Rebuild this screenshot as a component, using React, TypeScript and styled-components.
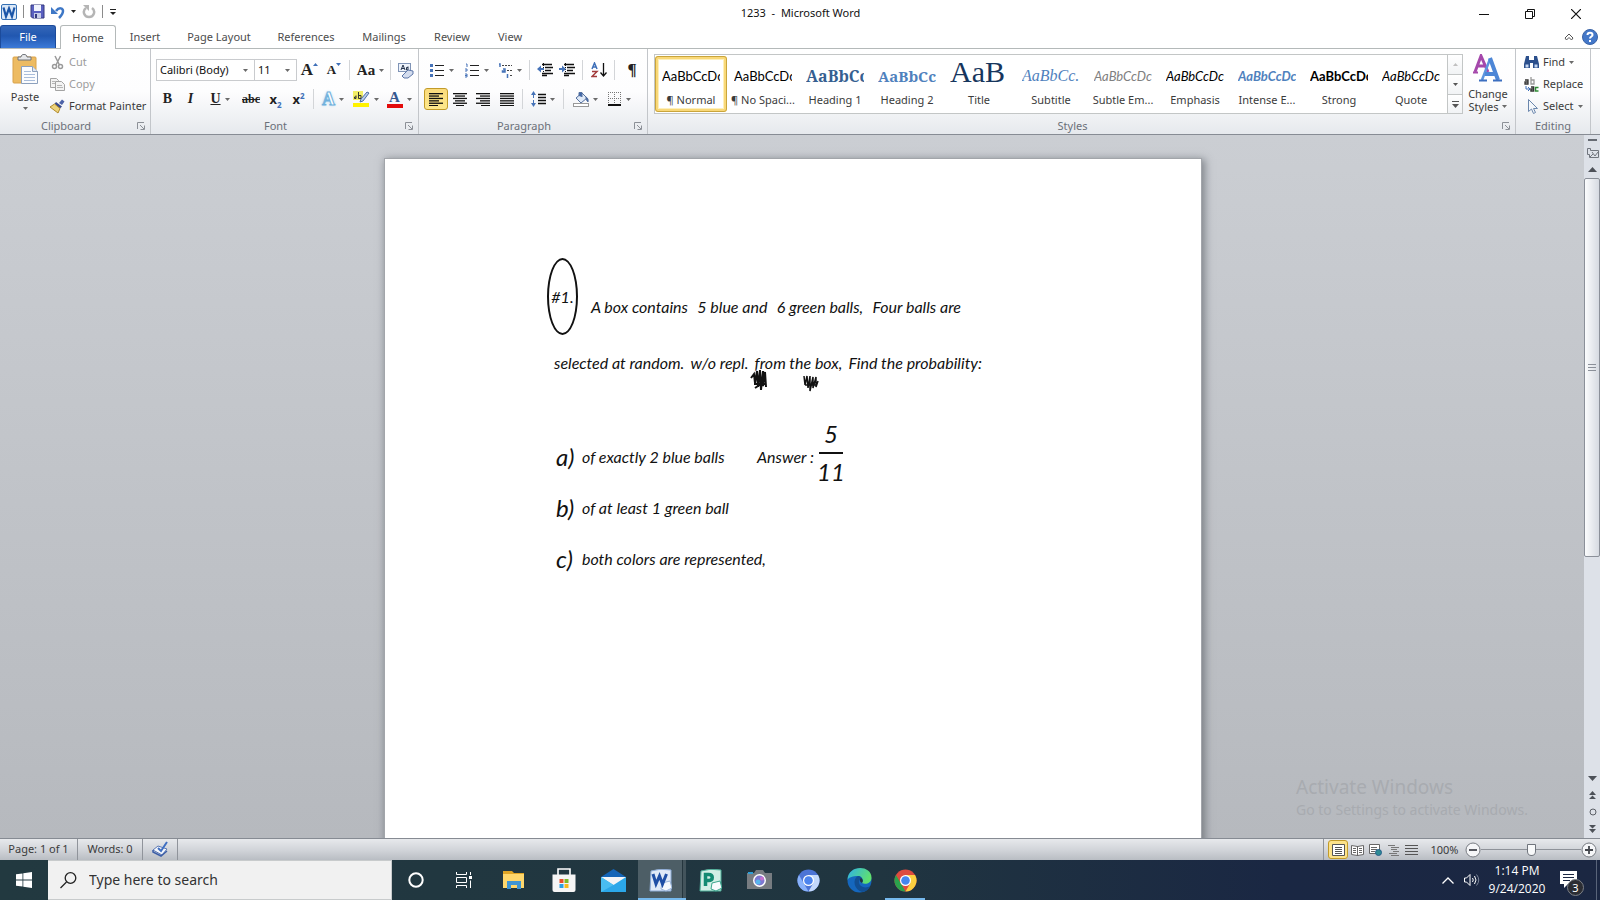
import React from "react";
import styled, { createGlobalStyle, css } from "styled-components";

const UI = `"Noto Sans", "Open Sans", sans-serif`;
const SERIF = `"Liberation Serif", serif`;

const Global = createGlobalStyle`
  *, *::before, *::after { box-sizing: border-box; }
  html, body { margin: 0; padding: 0; height: 100%; }
  #root { height: 100%; }
  body { font-family: ${UI}; font-size: 11px; line-height: 14px; color: #3b3b3b; overflow: hidden; }
  button, input, select { font: inherit; color: inherit; margin: 0; padding: 0; border: 0; background: none; border-radius: 0; outline: 0; }
  svg { display: block; flex: none; }
  h1, h2, p { margin: 0; font: inherit; }
`;

/* ---------- window frame ---------- */
const Screen = styled.div`
  display: grid;
  grid-template-rows: 25px 24px 86px minmax(0, 1fr) 22px 40px;
  height: 100vh;
  background: #fff;
`;
const TitleBar = styled.header`
  display: grid;
  grid-template-columns: 1fr auto 1fr;
  align-items: start;
`;
const QuickAccess = styled.div`
  display: flex;
  align-items: center;
  gap: 6px;
  height: 23px;
  padding-left: 1px;
`;
const PlainButton = styled.button`
  display: flex;
  align-items: center;
  justify-content: center;
`;
const ThinRule = styled.span`
  width: 1px;
  height: 13px;
  background: #8b8b8b;
`;
const WindowTitle = styled.h1`
  color: #111;
  line-height: 26px;
  white-space: pre;
`;
const WindowButtons = styled.div`
  display: flex;
  justify-content: flex-end;
  padding-right: 2px;
`;
const WindowButton = styled(PlainButton)`
  width: 46px;
  height: 28px;
`;

/* ---------- tabs ---------- */
const TabRow = styled.nav`
  display: flex;
  border-bottom: 1px solid #b4b9b9;
`;
const FileTab = styled.button`
  width: 56px;
  height: 23px;
  border: 1px solid #1c4b9b;
  border-bottom: 0;
  border-radius: 3px 3px 0 0;
  background: linear-gradient(#3567b8, #2157b0 45%, #3c7ad8);
  color: #fff;
  margin-right: 4px;
`;
const Tab = styled.button<{ $active?: boolean; $w: number }>`
  width: ${(p) => p.$w}px;
  height: 23px;
  color: #4c4c4c;
  ${(p) =>
    p.$active &&
    css`
      height: 24px;
      border: 1px solid #b4b9b9;
      border-bottom: 0;
      border-radius: 3px 3px 0 0;
      background: #fff;
    `}
`;
const TabTools = styled.div`
  display: flex;
  align-items: center;
  gap: 8px;
  margin-left: auto;
  padding-right: 3px;
`;

/* ---------- ribbon ---------- */
const Ribbon = styled.div`
  display: flex;
  background: linear-gradient(#fff, #fdfdfe 50%, #e6e9ed);
  border-bottom: 1px solid #878c94;
  padding-right: 10px;
`;
const Group = styled.section<{ $w?: number }>`
  display: flex;
  flex-direction: column;
  ${(p) => (p.$w ? `flex: 0 0 ${p.$w}px;` : "flex: 1 1 0; min-width: 0;")}
  border-right: 1px solid #c3c6ca;
`;
const GroupBody = styled.div`
  display: flex;
  flex: 1;
  min-height: 0;
`;
const GroupLabel = styled.div<{ $launcher?: boolean }>`
  display: grid;
  grid-template-columns: ${(p) => (p.$launcher ? "1fr 18px" : "1fr")};
  align-items: center;
  height: 17px;
  text-align: center;
  color: #6b7079;
`;
const BigButton = styled.button`
  display: flex;
  flex-direction: column;
  align-items: center;
  width: 50px;
  padding-top: 5px;
  line-height: 13px;
`;
const BigLabel = styled.span<{ $gap?: number }>`
  display: flex;
  flex-direction: column;
  align-items: center;
  gap: ${(p) => p.$gap ?? 0}px;
  margin-top: 5px;
`;
const Inline = styled.span`
  display: flex;
  align-items: center;
  gap: 4px;
`;
const SmallStack = styled.div<{ $pad?: number }>`
  display: flex;
  flex-direction: column;
  padding-top: 2px;
  padding-left: ${(p) => p.$pad ?? 0}px;
`;
const SmallButton = styled.button<{ $dim?: boolean }>`
  display: flex;
  align-items: center;
  gap: 4px;
  height: 22px;
  white-space: nowrap;
  color: ${(p) => (p.$dim ? "#9c9c9c" : "#3b3b3b")};
`;
const ToolRows = styled.div`
  display: flex;
  flex-direction: column;
  gap: 5px;
  padding: 9px 0 0 5px;
`;
const ToolRow = styled.div`
  display: flex;
  align-items: center;
  height: 24px;
`;
const Tool = styled.button<{ $w: number; $on?: boolean; $tight?: boolean }>`
  display: flex;
  align-items: center;
  justify-content: center;
  gap: ${(p) => (p.$tight ? 0 : 4)}px;
  width: ${(p) => p.$w}px;
  height: 22px;
  ${(p) =>
    p.$on &&
    css`
      border: 1px solid #c29b29;
      border-radius: 3px;
      background: linear-gradient(#fbdb7c, #fde88c);
    `}
`;
const Raised = styled.span`
  align-self: flex-start;
  padding-top: 4px;
`;
const ToolRule = styled.span<{ $m: number }>`
  width: 1px;
  height: 20px;
  margin: 0 ${(p) => p.$m}px;
  background: #d3d5d8;
`;
const Combo = styled.label<{ $w: number }>`
  display: grid;
  grid-template-columns: 1fr 11px;
  align-items: center;
  width: ${(p) => p.$w}px;
  height: 22px;
  padding-left: 3px;
  border: 1px solid #c9cbce;
  margin-right: -1px;
  background: #fff;
  color: #111;
`;
const ComboSelect = styled.select`
  appearance: none;
  width: 100%;
`;
const Letter = styled.span<{ $size: number; $color?: string; $italic?: boolean; $line?: string }>`
  font: ${(p) => (p.$italic ? "italic" : "normal")} bold ${(p) => p.$size}px/18px ${SERIF};
  color: ${(p) => p.$color ?? "#222"};
  text-decoration: ${(p) => p.$line ?? "none"};
`;
const SansX = styled.span`
  font: bold 13px/18px ${UI};
  color: #222;
`;
const Sub = styled.sub`
  font-size: 8px;
  line-height: 0;
  color: #3e6fb8;
`;
const Sup = styled.sup`
  font-size: 8px;
  line-height: 0;
  color: #3e6fb8;
`;
const GlowLetter = styled(Letter)`
  color: #fff;
  -webkit-text-stroke: 1px #6fb0dc;
  text-shadow: 0 0 3px #8cc6ec;
`;
const FontColor = styled.span`
  width: 16px;
  border-bottom: 4px solid #e30b0b;
  font: bold 15px/13px ${SERIF};
  color: #34588f;
`;

/* ---------- styles gallery ---------- */
const Gallery = styled.div`
  display: flex;
  flex: 1;
  min-width: 0;
  height: 60px;
  margin: 5px 0 0 6px;
  border: 1px solid #c3c6c6;
  background: #fff;
`;
const Cards = styled.div`
  display: flex;
  flex: 1;
  min-width: 0;
  overflow: hidden;
`;
const Card = styled.button<{ $on?: boolean }>`
  display: flex;
  flex-direction: column;
  align-items: center;
  flex: 0 0 72px;
  height: 56px;
  margin-top: 1px;
  padding: 4px 0 0;
  border: 3px solid transparent;
  border-radius: 3px;
  ${(p) =>
    p.$on &&
    css`
      border-color: #f9d878;
      box-shadow: inset 0 0 0 1px #fdf0bd, inset 0 0 0 1px #fdf0bd;
      outline: 1px solid #c9a53c;
      outline-offset: -1px;
    `}
`;
const Sample = styled.span<{ $kind: Kind }>`
  display: block;
  width: 58px;
  height: 22px;
  margin-bottom: 8px;
  overflow: hidden;
  white-space: nowrap;
  text-align: left;
  font: ${(p) => KINDS[p.$kind].font};
  color: ${(p) => KINDS[p.$kind].color};
`;
const CardLabel = styled.span`
  white-space: nowrap;
  line-height: 14px;
`;
const GalleryScroll = styled.div`
  display: grid;
  grid-template-rows: repeat(3, 1fr);
  width: 15px;
  border-left: 1px solid #c3c6c6;
`;
const GalleryArrow = styled(PlainButton)`
  & + & { border-top: 1px solid #c3c6c6; }
  background: linear-gradient(#fff, #f1f3f5);
`;

type Kind = "body" | "h1" | "h2" | "title" | "subtitle" | "subtle" | "emph" | "intense" | "strong";
const KINDS: Record<Kind, { font: string; color: string }> = {
  body: { font: `13px/26px Lato, sans-serif`, color: "#000" },
  h1: { font: `bold 16px/26px "Noto Serif", "Liberation Serif", serif`, color: "#365f91" },
  h2: { font: `bold 15px/26px "Noto Serif", "Liberation Serif", serif`, color: "#4f81bd" },
  title: { font: `30px/18px "Liberation Serif", serif`, color: "#17365d" },
  subtitle: { font: `italic 16px/26px "Liberation Serif", serif`, color: "#4f81bd" },
  subtle: { font: `italic 13px/26px Lato, sans-serif`, color: "#808080" },
  emph: { font: `italic 13px/26px Lato, sans-serif`, color: "#000" },
  intense: { font: `italic bold 13px/26px Lato, sans-serif`, color: "#4f81bd" },
  strong: { font: `bold 13px/26px Lato, sans-serif`, color: "#000" },
};
const STYLES: [string, Kind, string][] = [
  ["¶ Normal", "body", "AaBbCcDc"],
  ["¶ No Spaci...", "body", "AaBbCcDc"],
  ["Heading 1", "h1", "AaBbCc"],
  ["Heading 2", "h2", "AaBbCc"],
  ["Title", "title", "AaB"],
  ["Subtitle", "subtitle", "AaBbCc."],
  ["Subtle Em...", "subtle", "AaBbCcDc"],
  ["Emphasis", "emph", "AaBbCcDc"],
  ["Intense E...", "intense", "AaBbCcDc"],
  ["Strong", "strong", "AaBbCcDc"],
  ["Quote", "emph", "AaBbCcDc"],
];

/* ---------- document ---------- */
const Workspace = styled.main`
  position: relative;
  display: flex;
  min-height: 0;
  background: linear-gradient(#cbced3, #b6b9be);
`;
const Desk = styled.div`
  flex: 1;
  display: flex;
  justify-content: center;
  padding: 24px 0 0 2px;
  overflow: hidden;
`;
const Sheet = styled.article`
  position: relative;
  width: 816px;
  min-height: 1056px;
  padding: 99px 160px 0 162px;
  background: #fff;
  color: #111;
  box-shadow: 0 0 0 1px #a2a5aa, 2px 2px 8px 2px rgba(70, 74, 82, 0.55);
  font: italic 16px/24px Lato, sans-serif;
`;
const FirstLine = styled.div`
  display: flex;
  align-items: center;
  gap: 13px;
  height: 77px;
`;
const Circled = styled.h2`
  display: flex;
  align-items: center;
  justify-content: center;
  width: 31px;
  height: 77px;
  border: 2px solid #111;
  border-radius: 50%;
`;
const Phrases = styled.p<{ $w: number }>`
  display: flex;
  justify-content: space-between;
  width: ${(p) => p.$w}px;
  white-space: nowrap;
`;
const LineOne = styled.div`
  padding-top: 20px;
`;
const LineTwo = styled.div`
  padding: 16px 0 0 7px;
`;
const Questions = styled.ol`
  list-style: none;
  margin: 56px 0 0;
  padding: 0 0 0 9px;
`;
const Question = styled.li`
  display: flex;
  align-items: center;
  height: 51px;
  white-space: nowrap;
`;
const Mark = styled.span`
  width: 26px;
  font-size: 24px;
`;
const Wording = styled.span`
  width: 175px;
`;
const Fraction = styled.span`
  display: flex;
  flex-direction: column;
  align-items: center;
  width: 24px;
  margin-left: 5px;
  padding-bottom: 8px;
  line-height: 36px;
  font-size: 24px;
`;
const Over = styled.span`
  width: 100%;
  text-align: center;
  border-bottom: 2px solid #111;
`;
const Scribble = styled.svg<{ $x: number; $y: number }>`
  position: absolute;
  left: ${(p) => p.$x}px;
  top: ${(p) => p.$y}px;
`;
const Watermark = styled.aside`
  position: absolute;
  right: 69px;
  bottom: 17px;
  width: 236px;
  color: #a8abb0;
  font: 14px/22px ${UI};
  white-space: nowrap;
`;
const WatermarkTitle = styled.div`
  font-size: 19px;
  line-height: 24px;
`;
const ScrollBar = styled.div`
  display: flex;
  flex-direction: column;
  align-items: center;
  width: 17px;
  background: #dde1e8;
`;
const ScrollButton = styled(PlainButton)<{ $h: number }>`
  width: 17px;
  height: ${(p) => p.$h}px;
`;
const Track = styled.div`
  display: flex;
  flex: 1;
  width: 17px;
`;
const Thumb = styled.div`
  display: flex;
  align-items: center;
  justify-content: center;
  width: 16px;
  height: 64%;
  border: 1px solid #8b9099;
  border-radius: 2px;
  background: linear-gradient(90deg, #fbfcfd, #d6dae1);
`;

/* ---------- status bar ---------- */
const StatusBar = styled.footer`
  display: flex;
  align-items: center;
  border-top: 1px solid #868b93;
  background: linear-gradient(#e7e9ec, #d0d3d8 55%, #b9bdc3);
`;
const StatusItem = styled.button<{ $w: number }>`
  display: flex;
  align-items: center;
  justify-content: center;
  width: ${(p) => p.$w}px;
  height: 21px;
  padding-bottom: 2px;
  border-right: 1px solid #90949b;
  white-space: nowrap;
`;
const Views = styled.div`
  display: flex;
  align-items: center;
  height: 21px;
  margin-left: auto;
  padding-left: 4px;
  border-left: 1px solid #90949b;
`;
const ViewButton = styled(PlainButton)<{ $on?: boolean }>`
  width: 18px;
  height: 19px;
  ${(p) =>
    p.$on &&
    css`
      width: 20px;
      border: 1px solid #c29b29;
      border-radius: 3px;
      background: #fce28a;
    `}
`;
const ZoomValue = styled(PlainButton)`
  width: 41px;
  margin-left: 4px;
`;
const ZoomSlider = styled.input`
  appearance: none;
  width: 100px;
  height: 16px;
  background: linear-gradient(#8e9299, #8e9299) center / 100% 1px no-repeat;
  &::-webkit-slider-thumb {
    appearance: none;
    width: 9px;
    height: 12px;
    border: 1px solid #6f747c;
    border-radius: 1px 1px 5px 5px;
    background: #f8f9fa;
  }
`;
const EdgeGap = styled.span`
  width: 4px;
`;

/* ---------- taskbar ---------- */
const Taskbar = styled.footer`
  display: flex;
  background: linear-gradient(90deg, #223940, #203540 55%, #1a2743 80%, #1b2742);
  color: #fff;
`;
const TaskButton = styled.button<{ $w?: number; $active?: boolean; $open?: boolean }>`
  display: flex;
  align-items: center;
  justify-content: center;
  width: ${(p) => p.$w ?? 49}px;
  height: 40px;
  ${(p) =>
    p.$active &&
    css`
      padding-right: 4px;
      background: linear-gradient(90deg, #4d5e66 44px, #25363e 44px, #25363e 45px, #43545c 45px);
    `}
  ${(p) => p.$open && "box-shadow: inset 0 -2px #76b9ed;"}
`;
const Search = styled.label`
  display: flex;
  align-items: center;
  gap: 12px;
  width: 344px;
  padding-left: 12px;
  border: 1px solid #c8cbcc;
  border-left: 0;
  background: #f1f1f1;
  color: #333;
`;
const SearchInput = styled.input`
  flex: 1;
  min-width: 0;
  font: 14px/20px ${UI};
  &::placeholder { color: #333; opacity: 1; }
`;
const Tray = styled.div`
  display: flex;
  align-items: center;
  margin-left: auto;
  padding-right: 4px;
`;
const Clock = styled.button`
  width: 66px;
  font: 12px/18px "Open Sans", sans-serif;
  color: #fff;
  white-space: nowrap;
`;
const Notices = styled.button`
  position: relative;
  width: 47px;
  height: 40px;
  border-right: 1px solid #596479;
`;
const NoticeIcon = styled.span`
  position: absolute;
  left: 10px;
  top: 11px;
`;
const Badge = styled.span`
  position: absolute;
  left: 17px;
  top: 19px;
  width: 17px;
  height: 17px;
  border: 1px solid #7c8087;
  border-radius: 50%;
  background: #2b2d33;
  color: #fff;
  font-size: 11px;
  line-height: 15px;
  text-align: center;
`;

/* ---------- icons ---------- */
type SvgProps = { w: number; h?: number; children: React.ReactNode };
const Svg = ({ w, h = w, children }: SvgProps) => (
  <svg width={w} height={h} viewBox={`0 0 ${w} ${h}`} fill="none" aria-hidden="true">
    {children}
  </svg>
);
const Caret = ({ color = "#6a6a6a", up = false }: { color?: string; up?: boolean }) => (
  <Svg w={5} h={3}>
    <path d={up ? "M0 3h5L2.500 0z" : "M0 0h5L2.500 3z"} fill={color} />
  </Svg>
);
const Launcher = () => (
  <Svg w={8}>
    <path d="M.5 7V.5H7M3 3l4 4M7.500 3.500v4h-4" stroke="#8c9097" />
  </Svg>
);
const WordLogo = () => (
  <Svg w={16}>
    <rect x=".5" y=".5" width="15" height="15" rx="1.500" fill="#dbe8f7" stroke="#3470b4" />
    <path d="M2.500 3.500l2.500 9 3-8 3 8 2.500-9" stroke="#1c56a8" strokeWidth="2.200" />
  </Svg>
);
const SaveIcon = () => (
  <Svg w={15}>
    <path d="M1 1h13v13H2.500L1 12.500z" fill="#5a60c0" stroke="#34397f" />
    <path d="M4 1h7v6H4z" fill="#f1f4fd" />
    <path d="M4 9h7v5H4z" fill="#c7cde8" />
    <path d="M5 10h2v4H5z" fill="#34397f" />
  </Svg>
);
const UndoIcon = () => (
  <Svg w={14}>
    <path d="M5 6c3-4 7-3 7 0 0 3-2 5-4 7" stroke="#3e77c6" strokeWidth="2.500" />
    <path d="M0 2v7h7z" fill="#3e77c6" />
  </Svg>
);
const RedoIcon = () => (
  <Svg w={14}>
    <path d="M4 3C0 6 2 12 7 12s7-6 3-9" stroke="#b5b5b5" strokeWidth="2.500" />
    <path d="M1 0h6v6z" fill="#b5b5b5" />
  </Svg>
);
const PasteIcon = () => (
  <Svg w={27} h={31}>
    <rect x="1" y="3" width="23" height="26" rx="1" fill="#edbb62" stroke="#d9a24a" />
    <path d="M6 6V3h3c0-3.500 6-3.500 6 0h4v3z" fill="#e5e7ea" stroke="#6f7379" />
    <path d="M9.500 12.500h11l5 5v12h-16z" fill="#fbfcfe" stroke="#8ca0bd" />
    <path d="M20.500 12.500v5h5" stroke="#8ca0bd" fill="#dfe7f3" />
    <path d="M12 17.500h7M12 20.500h11M12 23.500h11M12 26.500h11" stroke="#a9bddb" />
  </Svg>
);
const CutIcon = () => (
  <Svg w={15}>
    <path d="M5 1l4.500 9M10.500 1L6 10" stroke="#9a9a9a" strokeWidth="1.500" />
    <circle cx="4.500" cy="11.500" r="2" stroke="#9a9a9a" strokeWidth="1.500" />
    <circle cx="10.500" cy="11.500" r="2" stroke="#9a9a9a" strokeWidth="1.500" />
  </Svg>
);
const CopyIcon = () => (
  <Svg w={15}>
    <path d="M.5 1.500h6l2 2v7h-8z" fill="#f3f3f3" stroke="#a3a3a3" />
    <path d="M5.500 4.500h6l3 3v6h-9z" fill="#f3f3f3" stroke="#a3a3a3" />
    <path d="M7 8.500h5M7 10.500h6M2 4.500h3M2 6.500h3" stroke="#b5b5b5" />
  </Svg>
);
const BrushIcon = () => (
  <Svg w={15}>
    <path d="M9 4l3-3.500 2.500 2L12 6z" fill="#4e63a8" />
    <path d="M6 3l6 4.500-2 2L4.500 5z" fill="#3b4b8c" />
    <path d="M4.500 5l5.500 4.500L8 14 0 8z" fill="#edd37a" stroke="#b08a2c" />
  </Svg>
);
const EraserIcon = () => (
  <Svg w={17}>
    <rect x="1.500" y="1.500" width="12" height="8" fill="#eef3fb" stroke="#8094b6" />
    <path d="M4 8l2-5 2 5M4.500 6.500h3M11 4.500v3.500H9.500V5.500H11" stroke="#27364f" />
    <path d="M5 14l6-6 5 1v3l-5 4H7z" fill="#d3dcee" stroke="#5d77a8" />
  </Svg>
);
const HighlightIcon = () => (
  <Svg w={17}>
    <rect y="0" width="10" height="9" fill="#f2ee66" />
    <path d="M3 4.500v3H1.500v-1.500H3M5.500 1v6.500H8V4.500H5.500" stroke="#333" />
    <path d="M14 1l2 1-6 8-3 1 1-3z" fill="#b9cdec" stroke="#4c6ca5" />
    <rect y="12" width="16" height="4" fill="#fff200" />
  </Svg>
);
const ListIcon = ({ kind }: { kind: "bullet" | "number" | "multi" }) => (
  <Svg w={15}>
    {kind === "bullet" && <path d="M0 2.500h3M0 7.500h3M0 12.500h3" stroke="#4673b8" strokeWidth="3" />}
    {kind === "number" && <path d="M1 1h1v3M0 6h2v2H0M0 11h2v3H0M0 12.500h2" stroke="#4673b8" />}
    {kind === "multi" ? (
      <>
        <path d="M1 1h1v3M5 6h2v3H4.500V8H7M9.500 11v4" stroke="#4673b8" strokeWidth="1.500" />
        <path d="M4 2.500h10M9 7.500h6M12 12.500h3" stroke="#444" strokeDasharray="2 1" />
      </>
    ) : (
      <path d="M5 2.500h9M5 7.500h9M5 12.500h9" stroke="#222" />
    )}
  </Svg>
);
const IndentIcon = ({ out }: { out?: boolean }) => (
  <Svg w={16} h={14}>
    <path d="M5 1.500h10M8 4.500h8M8 7.500h6M5 10.500h11M5 12.500h5" stroke="#111" strokeWidth="1.500" />
    <path d="M6.500 0v14" stroke="#111" strokeDasharray="1 1" />
    <path d={out ? "M0 6l4-3.500v2.500h3v2H4v2.500z" : "M7 6L3 2.500v2.500H0v2h3v2.500z"} fill="#4673b8" />
  </Svg>
);
const AlignIcon = ({ rows }: { rows: [number, number][] }) => (
  <Svg w={14} h={13}>
    {rows.map(([x, w], i) => (
      <rect key={i} x={x} y={i * 2.4} width={w} height="1.300" fill="#111" />
    ))}
  </Svg>
);
const LEFT: [number, number][] = [[0, 14], [0, 10], [0, 14], [0, 10], [0, 14], [0, 9]];
const CENTER: [number, number][] = [[0, 14], [2, 10], [0, 14], [2, 10], [0, 14], [3, 8]];
const RIGHT: [number, number][] = [[0, 14], [4, 10], [0, 14], [4, 10], [0, 14], [5, 9]];
const FULL: [number, number][] = [[0, 14], [0, 14], [0, 14], [0, 14], [0, 14], [0, 14]];

const SpacingIcon = () => (
  <Svg w={15} h={16}>
    <path d="M2.500 3v10" stroke="#4673b8" strokeDasharray="4 2" />
    <path d="M0 4l2.500-4L5 4zM0 12l2.500 4L5 12z" fill="#4673b8" />
    <path d="M7 3.500h8M7 6.500h8M7 9.500h8M7 12.500h8" stroke="#111" strokeWidth="1.300" />
  </Svg>
);
const BucketIcon = () => (
  <Svg w={16}>
    <path d="M3 7l6-5 5 5-6 5z" fill="#dfe9f7" stroke="#54709f" />
    <path d="M6 5V1.500h3V6M13 6c2 1 2.500 3 2 5-1-1-2-2-2-5z" stroke="#54709f" fill="#3f66a8" />
    <rect x=".5" y="12.500" width="15" height="3" fill="#fff" stroke="#999" />
  </Svg>
);
const BordersIcon = () => (
  <Svg w={14}>
    <path d="M.5 0v13M6.500 0v13M12.500 0v13M0 .5h13M0 6.500h13" stroke="#777" strokeDasharray="1 1" />
    <path d="M0 13h13" stroke="#111" strokeWidth="2" />
  </Svg>
);
const SortIcon = () => (
  <Svg w={16}>
    <path d="M1 7l2.500-6L6 7M2 5h3" stroke="#3e6fb8" strokeWidth="1.500" />
    <path d="M1 9.500h5l-5 5h5" stroke="#a33c3c" strokeWidth="1.500" />
    <path d="M12.500 1v12M9.500 10.500l3 3.500 3-3.500" stroke="#111" strokeWidth="1.300" />
  </Svg>
);
const ChangeStylesIcon = () => (
  <Svg w={30} h={28}>
    <path d="M2 18L8 2l7 16M5 12h8" stroke="#a548ab" strokeWidth="3" />
    <path d="M0 18.500h5" stroke="#a548ab" strokeWidth="2" />
    <path d="M9 26L17 5" stroke="#5d94de" strokeWidth="2.500" />
    <path d="M17 4l8 22M12 20h11" stroke="#4d86d6" strokeWidth="4" />
    <path d="M6 26.500h8M20 26.500h9" stroke="#3c6fc0" strokeWidth="2" />
  </Svg>
);
const FindIcon = () => (
  <Svg w={15} h={14}>
    <path d="M2 1h3v4h5V1h3l2 8v4H9V8H6v5H0V9z" fill="#2b4f8c" />
    <path d="M1.500 9.500h3v3h-3zM10.500 9.500h3v3h-3z" fill="#c4d6f1" />
  </Svg>
);
const ReplaceIcon = () => (
  <Svg w={15}>
    <path d="M1 3h3v4H1V5h3" stroke="#333" strokeWidth="1.300" />
    <path d="M7 0v7h3V3H7" stroke="#999" strokeWidth="1.300" />
    <path d="M2 9v3h4M4 10l2 2-2 2" stroke="#3e6fb8" />
    <path d="M7 10h2.500v4H7v-2h2.500" stroke="#333" strokeWidth="1.500" />
    <path d="M14.500 10.500h-3v3.500h3" stroke="#2f8a35" strokeWidth="1.500" />
  </Svg>
);
const SelectIcon = () => (
  <Svg w={15}>
    <path d="M4.500.5v12l3-2.500 2 4.500 2-1-2-4h4z" fill="#f4f7fb" stroke="#6b87ad" />
  </Svg>
);
const HelpIcon = () => (
  <Svg w={16}>
    <circle cx="8" cy="8" r="7.500" fill="#4478c9" stroke="#3a63a5" />
    <path d="M5.500 6c0-3 5-3 5 0 0 1.500-2.500 1.500-2.500 3.500M8 11v2" stroke="#fff" strokeWidth="2" />
  </Svg>
);
const ProofIcon = () => (
  <Svg w={17} h={16}>
    <path d="M1 9l5-4 9 3-5 6z" fill="#f4f7fc" stroke="#5b78b4" />
    <path d="M1 9v2l8 4 6-5" stroke="#3d5fa8" strokeWidth="1.500" />
    <path d="M6 7l3 3 6-9" stroke="#3f6fc2" strokeWidth="2" />
  </Svg>
);
const DoubleArrow = ({ down }: { down?: boolean }) => (
  <Svg w={7} h={8}>
    <path d={down ? "M0 0h7L3.500 3.500zM0 4h7L3.500 8z" : "M0 4h7L3.500 0zM0 8h7L3.500 4.500z"} fill="#4d5158" />
  </Svg>
);
const LayoutIcon = ({ kind }: { kind: "print" | "read" | "web" | "outline" | "draft" }) => (
  <Svg w={13} h={12}>
    {kind === "print" && <path d="M.5.5h12v11H.5zM3 3.500h7M3 5.500h7M3 7.500h7M3 9.500h7" fill="#fff" stroke="#555" />}
    {kind === "read" && <path d="M.5 1.500l6 1 6-1v9l-6 1-6-1zM6.500 2v10M2 4.500h3M2 6.500h3M2 8.500h3M8 4.500h3M8 6.500h3M8 8.500h3" fill="#fff" stroke="#666" />}
    {kind === "web" && (
      <>
        <path d="M.5.500h10v9H.5zM2 3.500h6M2 5.500h6M2 7.500h4" fill="#fff" stroke="#666" />
        <circle cx="9.500" cy="8.500" r="3" fill="#2e8c95" stroke="#275f8a" />
      </>
    )}
    {kind === "outline" && <path d="M1 1.500h7M4 3.500h8M4 5.500h6M6 7.500h6M2 9.500h8M4 11.500h8" stroke="#777" />}
    {kind === "draft" && <path d="M0 1.500h13M0 4.500h13M0 7.500h13M0 10.500h13" stroke="#555" />}
  </Svg>
);
const RoundSign = ({ plus }: { plus?: boolean }) => (
  <Svg w={16}>
    <circle cx="8" cy="8" r="7" fill="#f5f6f8" stroke="#777b82" />
    <path d={plus ? "M4 8h8M8 4v8" : "M4 8h8"} stroke="#44474d" strokeWidth="1.800" />
  </Svg>
);

/* taskbar pictures */
const StartIcon = () => (
  <Svg w={16}>
    <path d="M0 2.300l6.500-.9v6.200H0zM7.300 1.300L16 0v7.600H7.300zM0 8.400h6.500v6.200L0 13.700zM7.300 8.400H16V16l-8.700-1.200z" fill="#fff" />
  </Svg>
);
const SearchIcon = () => (
  <Svg w={17}>
    <circle cx="10.500" cy="6" r="5.300" stroke="#222" strokeWidth="1.300" />
    <path d="M6.500 10L.5 16" stroke="#222" strokeWidth="1.300" />
  </Svg>
);
const CortanaIcon = () => (
  <Svg w={16}>
    <circle cx="8" cy="8" r="6.700" stroke="#fff" strokeWidth="2" />
  </Svg>
);
const TaskViewIcon = () => (
  <Svg w={16}>
    <path d="M.5 0v2.500h10V0M.5 16v-2.500h10V16M.5 5.500h10v5H.5zM14.500 0v3M14.500 8.500V16" stroke="#fff" />
    <rect x="13" y="4" width="3" height="3" fill="#fff" />
  </Svg>
);
const FolderIcon = () => (
  <Svg w={22} h={20}>
    <path d="M0 1h9l2 2h10v15H0z" fill="#e0a526" />
    <path d="M0 4h21v14H0z" fill="#ffd76c" />
    <path d="M4 19v-8h14v8h-4v-4H8v4z" fill="#3f95d4" />
  </Svg>
);
const StoreIcon = () => (
  <Svg w={24}>
    <path d="M6 7V1h12v6" stroke="#fff" strokeWidth="1.600" />
    <path d="M.5 6.500h23V22q0 2-2 2h-19q-2 0-2-2z" fill="#f5f5f5" />
    <path d="M7.500 11h4v4h-4z" fill="#e74f2c" />
    <path d="M12.500 11h4v4h-4z" fill="#7db928" />
    <path d="M7.500 16h4v4h-4z" fill="#2c9fe4" />
    <path d="M12.500 16h4v4h-4z" fill="#f8b91f" />
  </Svg>
);
const MailIcon = () => (
  <Svg w={25} h={23}>
    <path d="M0 8l12.500-8L25 8z" fill="#1364b7" />
    <path d="M0 8h25v15H0z" fill="#2ba7e9" />
    <path d="M0 8h25l-12.500 8z" fill="#f2f4f6" />
    <path d="M0 8v15l12.500-7z" fill="#49bdf1" />
  </Svg>
);
const OfficeIcon = ({ kind }: { kind: "word" | "publisher" }) => (
  <Svg w={23}>
    <path d="M2 2q9-3 20-1v21H1z" fill={kind === "word" ? "#dfe9f7" : "#d2efe6"} stroke={kind === "word" ? "#8cabd6" : "#4dae98"} />
    <path d="M13 14l8-2 2 7-6 3-5-2z" fill="#f7fafd" stroke={kind === "word" ? "#9ab4da" : "#3aa58c"} />
    {kind === "word" ? (
      <path d="M4 5l3 10 3.500-8 3 8 4-10" stroke="#1f4fa5" strokeWidth="3" />
    ) : (
      <path d="M6.500 17V5.500h3c5 0 5 6 0 6h-2" stroke="#138a72" strokeWidth="3.500" />
    )}
  </Svg>
);
const CameraIcon = () => (
  <Svg w={25} h={20}>
    <path d="M0 3h7l2-3h7l2 3h7v16H0z" fill="#777c81" />
    <path d="M1 2h5v2H1z" fill="#2ea0d8" />
    <circle cx="12.500" cy="10.500" r="6.500" fill="#fff" />
    <circle cx="12.500" cy="10.500" r="5" fill="#7d78d0" />
    <circle cx="11" cy="12" r="2.500" fill="#58b6ee" />
    <circle cx="15" cy="8.500" r="2" fill="#c472cd" />
  </Svg>
);
const ChromeIcon = ({ a, b, c, hub }: { a: string; b: string; c: string; hub: string }) => (
  <Svg w={23}>
    <circle cx="11.500" cy="11.500" r="11" fill={a} />
    <path d="M1.970 6L6.740 14.250 11.500 22.500A11 11 0 0 1 1.970 6z" fill={b} />
    <path d="M11.500 6h9.530A11 11 0 0 1 11.500 22.500l4.760-8.250z" fill={c} />
    <circle cx="11.500" cy="11.500" r="5.500" fill="#fff" />
    <circle cx="11.500" cy="11.500" r="4.300" fill={hub} />
  </Svg>
);
const EdgeIcon = () => (
  <Svg w={25}>
    <defs>
      <linearGradient id="edgeTop" x1="0" y1="0" x2="1" y2="0.400">
        <stop offset="0" stopColor="#2fb1e8" />
        <stop offset="1" stopColor="#5fe070" />
      </linearGradient>
    </defs>
    <circle cx="12.500" cy="12.500" r="12" fill="#1567be" />
    <path d="M.5 12C1-4 25-3 24.500 10c0 5-6 7-9.500 5 2-3 0-7-4-7C6 8 2 9 .5 12z" fill="url(#edgeTop)" />
    <path d="M11 8c-6 3-4 14 4 16 4 0 7-3 8-6-4 3-11 1-11-4 0-2 1-3 3-3-1-2-2-3-4-3z" fill="#124f93" />
    <path d="M15 15c-2-1-3-3-1-5 2 1 2.500 3 1 5z" fill="#20343f" />
  </Svg>
);

/* ---------- parts ---------- */
const RibbonGroup = ({ label, w, launcher, children }: { label: string; w?: number; launcher?: boolean; children: React.ReactNode }) => (
  <Group $w={w} aria-label={label}>
    <GroupBody>{children}</GroupBody>
    <GroupLabel $launcher={launcher}>
      <span>{label}</span>
      {launcher && (
        <PlainButton aria-label={`${label} options`}>
          <Launcher />
        </PlainButton>
      )}
    </GroupLabel>
  </Group>
);

const ClipboardGroup = () => (
  <RibbonGroup label="Clipboard" w={151} launcher>
    <BigButton>
      <PasteIcon />
      <BigLabel $gap={4}>
        Paste
        <Caret />
      </BigLabel>
    </BigButton>
    <SmallStack>
      <SmallButton $dim><CutIcon />Cut</SmallButton>
      <SmallButton $dim><CopyIcon />Copy</SmallButton>
      <SmallButton><BrushIcon />Format Painter</SmallButton>
    </SmallStack>
  </RibbonGroup>
);

const FontGroup = () => (
  <RibbonGroup label="Font" w={268} launcher>
    <ToolRows>
      <ToolRow>
        <Combo $w={99}>
          <ComboSelect aria-label="Font"><option>Calibri (Body)</option></ComboSelect>
          <Caret />
        </Combo>
        <Combo $w={43}>
          <ComboSelect aria-label="Font size"><option>11</option></ComboSelect>
          <Caret />
        </Combo>
        <Tool $w={27} $tight aria-label="Grow font"><Letter $size={17}>A</Letter><Raised><Caret color="#3e6fb8" up /></Raised></Tool>
        <Tool $w={22} $tight aria-label="Shrink font"><Letter $size={13}>A</Letter><Raised><Caret color="#3e6fb8" /></Raised></Tool>
        <ToolRule $m={4} />
        <Tool $w={33}><Letter $size={15}>Aa</Letter><Caret /></Tool>
        <ToolRule $m={3} />
        <Tool $w={22} aria-label="Clear formatting"><EraserIcon /></Tool>
      </ToolRow>
      <ToolRow>
        <Tool $w={23}><Letter $size={14}>B</Letter></Tool>
        <Tool $w={23}><Letter $size={14} $italic>I</Letter></Tool>
        <Tool $w={36}><Letter $size={14} $line="underline">U</Letter><Caret /></Tool>
        <Tool $w={26}><Letter $size={12} $line="line-through">abc</Letter></Tool>
        <Tool $w={23}><SansX>x<Sub>2</Sub></SansX></Tool>
        <Tool $w={23}><SansX>x<Sup>2</Sup></SansX></Tool>
        <ToolRule $m={3} />
        <Tool $w={32}><GlowLetter $size={18}>A</GlowLetter><Caret /></Tool>
        <Tool $w={34} aria-label="Highlight"><HighlightIcon /><Caret /></Tool>
        <Tool $w={32}><FontColor>A</FontColor><Caret /></Tool>
      </ToolRow>
    </ToolRows>
  </RibbonGroup>
);

const ParagraphGroup = () => (
  <RibbonGroup label="Paragraph" w={229} launcher>
    <ToolRows>
      <ToolRow>
        <Tool $w={36} aria-label="Bullets"><ListIcon kind="bullet" /><Caret /></Tool>
        <Tool $w={34} aria-label="Numbering"><ListIcon kind="number" /><Caret /></Tool>
        <Tool $w={32} aria-label="Multilevel list"><ListIcon kind="multi" /><Caret /></Tool>
        <ToolRule $m={3} />
        <Tool $w={23} aria-label="Decrease indent"><IndentIcon out /></Tool>
        <Tool $w={22} aria-label="Increase indent"><IndentIcon /></Tool>
        <ToolRule $m={4} />
        <Tool $w={23} aria-label="Sort"><SortIcon /></Tool>
        <ToolRule $m={4} />
        <Tool $w={26}><Letter $size={17}>¶</Letter></Tool>
      </ToolRow>
      <ToolRow>
        <Tool $w={24} $on aria-label="Align left"><AlignIcon rows={LEFT} /></Tool>
        <Tool $w={23} aria-label="Center"><AlignIcon rows={CENTER} /></Tool>
        <Tool $w={24} aria-label="Align right"><AlignIcon rows={RIGHT} /></Tool>
        <Tool $w={23} aria-label="Justify"><AlignIcon rows={FULL} /></Tool>
        <ToolRule $m={4} />
        <Tool $w={32} aria-label="Line spacing"><SpacingIcon /><Caret /></Tool>
        <ToolRule $m={4} />
        <Tool $w={34} aria-label="Shading"><BucketIcon /><Caret /></Tool>
        <Tool $w={34} aria-label="Borders"><BordersIcon /><Caret /></Tool>
      </ToolRow>
    </ToolRows>
  </RibbonGroup>
);

const StylesGroup = () => (
  <RibbonGroup label="Styles" launcher>
    <GalleryRow>
      <Gallery>
        <Cards>
          {STYLES.map(([name, kind, sample], i) => (
            <Card key={name} $on={i === 0}>
              <Sample $kind={kind}>{sample}</Sample>
              <CardLabel>{name}</CardLabel>
            </Card>
          ))}
        </Cards>
        <GalleryScroll>
          <GalleryArrow aria-label="Previous styles"><Caret up color="#c0c0c0" /></GalleryArrow>
          <GalleryArrow aria-label="Next styles"><Caret color="#555" /></GalleryArrow>
          <GalleryArrow aria-label="More styles">
            <Svg w={7} h={8}><path d="M0 1.500h7" stroke="#555" /><path d="M0 4h7L3.500 8z" fill="#555" /></Svg>
          </GalleryArrow>
        </GalleryScroll>
      </Gallery>
      <BigButton>
        <ChangeStylesIcon />
        <BigLabel>
          Change
          <Inline>Styles<Caret /></Inline>
        </BigLabel>
      </BigButton>
    </GalleryRow>
  </RibbonGroup>
);
const GalleryRow = styled.div`
  display: flex;
  flex: 1;
  min-width: 0;
  padding-right: 2px;
`;

const EditingGroup = () => (
  <RibbonGroup label="Editing" w={75}>
    <SmallStack $pad={8}>
      <SmallButton><FindIcon />Find<Caret /></SmallButton>
      <SmallButton><ReplaceIcon />Replace</SmallButton>
      <SmallButton><SelectIcon />Select<Caret /></SmallButton>
    </SmallStack>
  </RibbonGroup>
);

const TABS: [string, number][] = [
  ["Insert", 58],
  ["Page Layout", 90],
  ["References", 84],
  ["Mailings", 72],
  ["Review", 64],
  ["View", 52],
];

export default function App() {
  return (
    <Screen>
      <Global />
      <TitleBar>
        <QuickAccess>
          <WordLogo />
          <ThinRule />
          <PlainButton aria-label="Save"><SaveIcon /></PlainButton>
          <PlainButton aria-label="Undo"><UndoIcon /></PlainButton>
          <Caret color="#222" />
          <PlainButton aria-label="Repeat"><RedoIcon /></PlainButton>
          <ThinRule />
          <PlainButton aria-label="Customize toolbar">
            <Svg w={8} h={8}><path d="M1 1.500h6" stroke="#222" /><path d="M1 4h6L4 7z" fill="#222" /></Svg>
          </PlainButton>
        </QuickAccess>
        <WindowTitle>1233  -  Microsoft Word</WindowTitle>
        <WindowButtons>
          <WindowButton aria-label="Minimize"><Svg w={10}><path d="M0 5.500h10" stroke="#111" /></Svg></WindowButton>
          <WindowButton aria-label="Restore"><Svg w={10}><path d="M.5 2.500h7v7h-7zM2.500 2.500v-2h7v7h-2" stroke="#111" /></Svg></WindowButton>
          <WindowButton aria-label="Close"><Svg w={10}><path d="M0 0l10 10M10 0L0 10" stroke="#111" strokeWidth="1.200" /></Svg></WindowButton>
        </WindowButtons>
      </TitleBar>

      <TabRow>
        <FileTab>File</FileTab>
        <Tab $w={56} $active>Home</Tab>
        {TABS.map(([name, w]) => (
          <Tab key={name} $w={w}>{name}</Tab>
        ))}
        <TabTools>
          <PlainButton aria-label="Collapse ribbon">
            <Svg w={10} h={8}><path d="M1 5l4-4 4 4-1.500 2L5 4.500 2.500 7z" stroke="#555" /></Svg>
          </PlainButton>
          <PlainButton aria-label="Help"><HelpIcon /></PlainButton>
        </TabTools>
      </TabRow>

      <Ribbon>
        <ClipboardGroup />
        <FontGroup />
        <ParagraphGroup />
        <StylesGroup />
        <EditingGroup />
      </Ribbon>

      <Workspace>
        <Desk>
          <Sheet>
            <FirstLine>
              <Circled>#1.</Circled>
              <LineOne>
                <Phrases $w={370}>
                  <span>A box contains</span>
                  <span>5 blue and</span>
                  <span>6 green balls,</span>
                  <span>Four balls are</span>
                </Phrases>
              </LineOne>
            </FirstLine>
            <LineTwo>
              <Phrases $w={428}>
                <span>selected at random.</span>
                <span>w/o repl.</span>
                <span>from the box,</span>
                <span>Find the probability:</span>
              </Phrases>
            </LineTwo>
            <Questions>
              <Question>
                <Mark>a)</Mark>
                <Wording>of exactly 2 blue balls</Wording>
                <span>Answer :</span>
                <Fraction><Over>5</Over><span>11</span></Fraction>
              </Question>
              <Question><Mark>b)</Mark><Wording>of at least 1 green ball</Wording></Question>
              <Question><Mark>c)</Mark><Wording>both colors are represented,</Wording></Question>
            </Questions>
            <Scribble $x={365} $y={210} width="18" height="24" viewBox="0 0 18 24" fill="none" aria-hidden="true">
              <path d="M1 9l3-4 1 9 2-12 1 16 2-17 1 20 2-19 0 15 2-14 1 15M4 15h11M5 8l10 3M5 19l9-6" stroke="#111" strokeWidth="2" />
            </Scribble>
            <Scribble $x={417} $y={214} width="18" height="20" viewBox="0 0 18 20" fill="none" aria-hidden="true">
              <path d="M2 3l1 9 2-9 1 12 2-12 0 15 3-14 0 11 3-11 0 10 2-6M3 12h11" stroke="#111" strokeWidth="1.500" />
            </Scribble>
          </Sheet>
        </Desk>
        <Watermark>
          <WatermarkTitle>Activate Windows</WatermarkTitle>
          Go to Settings to activate Windows.
        </Watermark>
        <ScrollBar>
          <ScrollButton $h={9} aria-label="Split"><Svg w={9} h={2}><path d="M0 1h9" stroke="#666b73" strokeWidth="2" /></Svg></ScrollButton>
          <ScrollButton $h={17} aria-label="View ruler">
            <Svg w={12}><path d="M.5 1.500h3v2h8v7h-9v-3h-2zM5 5l3 4 3-4M3 10l3-3" stroke="#70757d" /></Svg>
          </ScrollButton>
          <ScrollButton $h={17} aria-label="Scroll up"><Svg w={9} h={5}><path d="M0 5h9L4.500 0z" fill="#4d5158" /></Svg></ScrollButton>
          <Track>
            <Thumb><Svg w={8} h={7}><path d="M0 .5h8M0 3.500h8M0 6.500h8" stroke="#8b9099" /></Svg></Thumb>
          </Track>
          <ScrollButton $h={16} aria-label="Scroll down"><Svg w={9} h={5}><path d="M0 0h9L4.500 5z" fill="#4d5158" /></Svg></ScrollButton>
          <ScrollButton $h={17} aria-label="Previous page"><DoubleArrow /></ScrollButton>
          <ScrollButton $h={17} aria-label="Select browse object"><Svg w={8}><circle cx="4" cy="4" r="3" stroke="#5c6067" /></Svg></ScrollButton>
          <ScrollButton $h={18} aria-label="Next page"><DoubleArrow down /></ScrollButton>
        </ScrollBar>
      </Workspace>

      <StatusBar>
        <StatusItem $w={78}>Page: 1 of 1</StatusItem>
        <StatusItem $w={65}>Words: 0</StatusItem>
        <StatusItem $w={35} aria-label="Proofing"><ProofIcon /></StatusItem>
        <Views>
          <ViewButton $on aria-label="Print layout"><LayoutIcon kind="print" /></ViewButton>
          <ViewButton aria-label="Full screen reading"><LayoutIcon kind="read" /></ViewButton>
          <ViewButton aria-label="Web layout"><LayoutIcon kind="web" /></ViewButton>
          <ViewButton aria-label="Outline"><LayoutIcon kind="outline" /></ViewButton>
          <ViewButton aria-label="Draft"><LayoutIcon kind="draft" /></ViewButton>
        </Views>
        <ZoomValue>100%</ZoomValue>
        <PlainButton aria-label="Zoom out"><RoundSign /></PlainButton>
        <ZoomSlider type="range" aria-label="Zoom" min={0} max={100} defaultValue={50} />
        <PlainButton aria-label="Zoom in"><RoundSign plus /></PlainButton>
        <EdgeGap />
      </StatusBar>

      <Taskbar>
        <TaskButton $w={48} aria-label="Start"><StartIcon /></TaskButton>
        <Search>
          <SearchIcon />
          <SearchInput placeholder="Type here to search" aria-label="Search" />
        </Search>
        <TaskButton $w={48} aria-label="Cortana"><CortanaIcon /></TaskButton>
        <TaskButton $w={48} aria-label="Task view"><TaskViewIcon /></TaskButton>
        <TaskButton $w={52} aria-label="File Explorer"><FolderIcon /></TaskButton>
        <TaskButton $w={48} aria-label="Store"><StoreIcon /></TaskButton>
        <TaskButton $w={50} aria-label="Mail"><MailIcon /></TaskButton>
        <TaskButton $w={48} $active $open aria-label="Word"><OfficeIcon kind="word" /></TaskButton>
        <TaskButton aria-label="Publisher"><OfficeIcon kind="publisher" /></TaskButton>
        <TaskButton aria-label="Camera"><CameraIcon /></TaskButton>
        <TaskButton aria-label="Chromium"><ChromeIcon a="#4c74d6" b="#88b1fa" c="#c3d8fc" hub="#4c84ee" /></TaskButton>
        <TaskButton $w={52} aria-label="Edge"><EdgeIcon /></TaskButton>
        <TaskButton $w={40} $open aria-label="Chrome"><ChromeIcon a="#dd4b3e" b="#2ba24c" c="#fcd03f" hub="#4486ee" /></TaskButton>
        <Tray>
          <TaskButton $w={24} aria-label="Show hidden icons"><Svg w={12} h={7}><path d="M.5 6.500L6 1l5.500 5.500" stroke="#fff" strokeWidth="1.300" /></Svg></TaskButton>
          <TaskButton $w={24} aria-label="Volume">
            <Svg w={16} h={14}>
              <path d="M.5 5v4h2l3.500 3.500v-11L2.500 5z" stroke="#fff" />
              <path d="M8.500 5q1.500 2 0 4M10.500 3q3 4 0 8" stroke="#fff" />
              <path d="M12.500 1.500q4.500 5.500 0 11" stroke="#7c869a" />
            </Svg>
          </TaskButton>
          <Clock>1:14 PM<br />9/24/2020</Clock>
          <Notices aria-label="Notifications">
            <NoticeIcon>
              <Svg w={17}><path d="M0 0h17v13H8l-4 4v-4H0z" fill="#fff" /><path d="M3 3.500h11M3 6.500h11M3 9.500h7" stroke="#1b2742" /></Svg>
            </NoticeIcon>
            <Badge>3</Badge>
          </Notices>
        </Tray>
      </Taskbar>
    </Screen>
  );
}
